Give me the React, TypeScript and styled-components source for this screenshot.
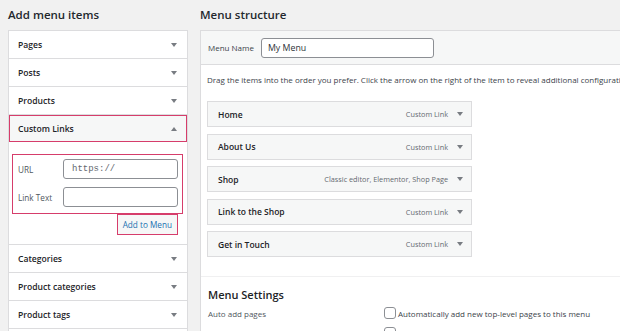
import React from "react";
import styled, { createGlobalStyle } from "styled-components";

const Global = createGlobalStyle`
  html, body { margin: 0; padding: 0; }
  body {
    background: #f1f1f1;
    font-family: "Open Sans", "Noto Sans", sans-serif;
    color: #1d2327;
    width: 620px;
    height: 331px;
    overflow: hidden;
  }
`;

const Page = styled.div`
  display: flex;
  gap: 12px;
  padding-left: 8px;
  width: 1000px;
`;

const Column = styled.div<{ $w: number }>`
  width: ${(p) => p.$w}px;
  flex: none;
  display: flex;
  flex-direction: column;
`;

const Heading = styled.h2`
  margin: 0;
  height: 30px;
  display: flex;
  align-items: center;
  font-size: 11.5px;
  font-weight: 600;
  color: #23282d;
  padding-bottom: 2px;
  box-sizing: border-box;
`;

const Accordion = styled.div`
  background: #fff;
  border: 1px solid #dcdcde;
  border-bottom: none;
`;

const Section = styled.div`
  border-bottom: 1px solid #dcdcde;
`;

const Title = styled.div<{ $open?: boolean }>`
  height: 27px;
  display: flex;
  align-items: center;
  justify-content: space-between;
  padding: 0 10px 0 9px;
  font-size: 8.6px;
  font-weight: 600;
  color: #1d2327;
  background: ${(p) => (p.$open ? "#f6f7f7" : "#fff")};
  box-sizing: border-box;
  ${(p) => (p.$open ? "outline: 1.5px solid #d63d6b; outline-offset: -1.5px;" : "")}
`;

const Arrow = styled.span<{ $up?: boolean }>`
  width: 0;
  height: 0;
  border-left: 3px solid transparent;
  border-right: 3px solid transparent;
  ${(p) =>
    p.$up
      ? "border-bottom: 4px solid #787c82;"
      : "border-top: 4px solid #787c82;"}
`;

const Content = styled.div`
  padding: 12px 4px 9px 3px;
  display: flex;
  flex-direction: column;
  align-items: flex-end;
`;

const Highlight = styled.div`
  align-self: stretch;
  outline: 1.5px solid #d63d6b;
  outline-offset: -1.5px;
  padding: 5px 5px 7px 6px;
  display: flex;
  flex-direction: column;
  gap: 8px;
`;

const FieldRow = styled.div`
  display: flex;
  align-items: center;
  justify-content: space-between;
`;

const FieldLabel = styled.label`
  font-size: 8.2px;
  color: #50575e;
`;

const TextInput = styled.div<{ $mono?: boolean }>`
  width: 115px;
  height: 20px;
  box-sizing: border-box;
  border: 1px solid #8c8f94;
  border-radius: 3px;
  background: #fff;
  display: flex;
  align-items: center;
  padding-left: 8px;
  font-size: 9px;
  color: #646970;
  font-family: ${(p) => (p.$mono ? '"Liberation Mono", "DejaVu Sans Mono", monospace' : "inherit")};
`;

const AddButton = styled.div`
  margin-right: 5px;
  height: 21px;
  box-sizing: border-box;
  padding: 0 5px;
  display: flex;
  align-items: center;
  font-size: 8.2px;
  color: #2271b1;
  background: #f6f7f7;
  border: 1.5px solid #d63d6b;
`;

const Panel = styled.div`
  background: #fff;
  border: 1px solid #dcdcde;
`;

const PanelHeader = styled.div`
  height: 34px;
  box-sizing: border-box;
  display: flex;
  align-items: center;
  gap: 7px;
  padding: 0 7px;
  background: #f6f7f7;
  border-bottom: 1px solid #dcdcde;
`;

const NameLabel = styled.span`
  font-size: 8px;
  color: #3c434a;
`;

const NameInput = styled.div`
  width: 173px;
  height: 20px;
  box-sizing: border-box;
  border: 1px solid #8c8f94;
  border-radius: 3px;
  background: #fff;
  display: flex;
  align-items: center;
  padding-left: 6px;
  font-size: 8.8px;
  color: #2c3338;
`;

const Body = styled.div`
  padding: 0 6px;
`;

const Hint = styled.p`
  margin: 0;
  height: 36px;
  box-sizing: border-box;
  padding-bottom: 8px;
  display: flex;
  align-items: center;
  font-size: 8px;
  color: #3c434a;
  white-space: nowrap;
`;

const Items = styled.div`
  display: flex;
  flex-direction: column;
  gap: 6.5px;
  width: 265px;
  padding-bottom: 19px;
`;

const Item = styled.div`
  height: 26px;
  box-sizing: border-box;
  border: 1px solid #dcdcde;
  background: #f6f7f7;
  display: flex;
  align-items: center;
  padding: 0 8px 0 10px;
  gap: 9px;
`;

const ItemTitle = styled.span`
  flex: 1;
  font-size: 8.5px;
  font-weight: 600;
  color: #1d2327;
`;

const ItemType = styled.span`
  font-size: 7.3px;
  color: #646970;
`;

const Settings = styled.div`
  border-top: 1px solid #f0f0f1;
  margin: 0 -6px;
  padding: 8px 7px 0;
`;

const SettingsHeading = styled.h3`
  margin: 0;
  height: 18px;
  display: flex;
  align-items: center;
  font-size: 11px;
  font-weight: 600;
  color: #1d2327;
`;

const SettingRow = styled.div`
  display: flex;
  align-items: center;
  height: 20px;
`;

const SettingLabel = styled.span`
  width: 176px;
  font-size: 8px;
  color: #50575e;
`;

const Check = styled.span`
  width: 12px;
  height: 12px;
  box-sizing: border-box;
  border: 1px solid #8c8f94;
  border-radius: 3px;
  background: #fff;
  margin-right: 2px;
`;

const CheckText = styled.span`
  font-size: 8px;
  color: #3c434a;
`;

const sections = ["Pages", "Posts", "Products"];
const after = ["Categories", "Product categories", "Product tags", "Format"];

const menuItems = [
  { t: "Home", k: "Custom Link" },
  { t: "About Us", k: "Custom Link" },
  { t: "Shop", k: "Classic editor, Elementor, Shop Page" },
  { t: "Link to the Shop", k: "Custom Link" },
  { t: "Get in Touch", k: "Custom Link" },
];

export default function App() {
  return (
    <>
      <Global />
      <Page>
        <Column $w={180}>
          <Heading>Add menu items</Heading>
          <Accordion>
            {sections.map((s) => (
              <Section key={s}>
                <Title>
                  {s}
                  <Arrow />
                </Title>
              </Section>
            ))}
            <Section>
              <Title $open>
                Custom Links
                <Arrow $up />
              </Title>
              <Content>
                <Highlight>
                  <FieldRow>
                    <FieldLabel>URL</FieldLabel>
                    <TextInput $mono>https://</TextInput>
                  </FieldRow>
                  <FieldRow>
                    <FieldLabel>Link Text</FieldLabel>
                    <TextInput />
                  </FieldRow>
                </Highlight>
                <AddButton>Add to Menu</AddButton>
              </Content>
            </Section>
            {after.map((s) => (
              <Section key={s}>
                <Title>
                  {s}
                  <Arrow />
                </Title>
              </Section>
            ))}
          </Accordion>
        </Column>
        <Column $w={600}>
          <Heading>Menu structure</Heading>
          <Panel>
            <PanelHeader>
              <NameLabel>Menu Name</NameLabel>
              <NameInput>My Menu</NameInput>
            </PanelHeader>
            <Body>
              <Hint>
                Drag the items into the order you prefer. Click the arrow on the right of the item to reveal additional configuration options.
              </Hint>
              <Items>
                {menuItems.map((m) => (
                  <Item key={m.t}>
                    <ItemTitle>{m.t}</ItemTitle>
                    <ItemType>{m.k}</ItemType>
                    <Arrow />
                  </Item>
                ))}
              </Items>
              <Settings>
                <SettingsHeading>Menu Settings</SettingsHeading>
                <SettingRow>
                  <SettingLabel>Auto add pages</SettingLabel>
                  <Check />
                  <CheckText>Automatically add new top-level pages to this menu</CheckText>
                </SettingRow>
                <SettingRow>
                  <SettingLabel>Display location</SettingLabel>
                  <Check />
                  <CheckText>Primary Menu</CheckText>
                </SettingRow>
              </Settings>
            </Body>
          </Panel>
        </Column>
      </Page>
    </>
  );
}
